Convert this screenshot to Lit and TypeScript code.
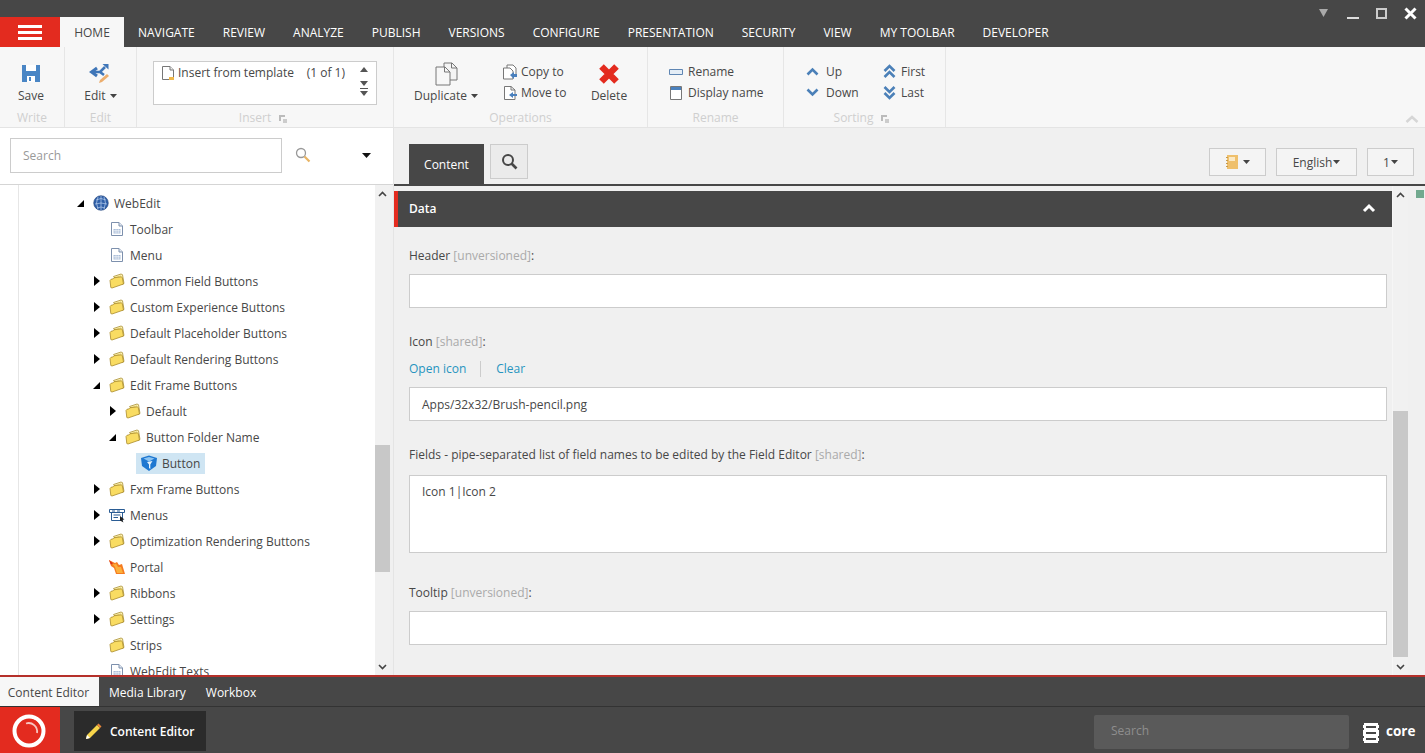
import { LitElement, html, svg, css } from "lit";
import { customElement } from "lit/decorators.js";

const folder = html`<svg width="16" height="16" viewBox="0 0 16 16"><path d="M4.500 3.500L12 1L13.500 1.700L15 10.500L13 11.500Z" fill="#fef4b8" stroke="#a98f34" stroke-width=".8"/><path d="M6 4.500L12 2.800" stroke="#e3c95c" stroke-width=".7"/><path d="M1 7.500L2 6.300L3.800 6L4.800 4.800L12.500 3.800L13.300 4.800L14.500 11L3 15L1.800 14.500Z" fill="#f9dc62" stroke="#a98a2b" stroke-width=".8" stroke-linejoin="round"/></svg>`;
const page = html`<svg width="16" height="16" viewBox="0 0 16 16"><path d="M2.500 1.500H10L13.500 5V14.500H2.500Z" fill="#fff" stroke="#7d90ad"/><path d="M10 1.500V5H13.500" fill="#e4eaf3" stroke="#7d90ad"/><path d="M4.500 8H11.500V12.500H4.500Z" fill="#a9bdd9"/><path d="M4.500 9.500H11.500M4.500 11H11.500M7 8V12.500M9.300 8V12.500" stroke="#fff" stroke-width=".5"/></svg>`;
const globe = html`<svg width="16" height="16" viewBox="0 0 16 16"><circle cx="8" cy="8" r="7.300" fill="#2f5fa8" stroke="#24457c" stroke-width=".6"/><path d="M3 5Q8 2 13 5M2 9Q8 7 14 9M4 13Q8 11 12 13M8 1V15M5 2Q2 8 5 14M11 2Q14 8 11 14" fill="none" stroke="#b9d0ee" stroke-width=".7"/></svg>`;
const btnIcon = html`<svg width="16" height="16" viewBox="0 0 16 16"><path d="M0 3L8 .5L16 3L15 11L8 16L1 11Z" fill="#1f78d1"/><path d="M2.500 3.500L8 2L13.500 3.500L8 6.500Z" fill="#8cc4f2"/><path d="M6 7L11.500 6L9.300 9.500V14L8 13V9.500Z" fill="#e8f3fc"/></svg>`;
const menusIcon = html`<svg width="16" height="16" viewBox="0 0 16 16"><path d="M.5 2.500H15.500V5.500H.5ZM2.500 5.500H13.500V13.500H2.500Z" fill="#fff" stroke="#2a5c94"/><path d="M4.500 8H11.500M4.500 10.500H9M3 4H6M8 4H11" stroke="#2a5c94"/><path d="M11 9L15.500 12.500L13.300 12.700L14.500 15.500L11 13.500Z" fill="#222"/></svg>`;
const portal = html`<svg width="16" height="16" viewBox="0 0 16 16"><path d="M0 1L6 4L8 3L10 6L13 5L16 15H7L5 9L2 7Z" fill="#f57b20"/><path d="M2 3L5 5.500L7 4.500L9 8L12 8L14 14H8L6 8Z" fill="#fbb03b"/><path d="M0 1L4 4.500L2 5.500Z" fill="#d92a1c"/></svg>`;
const chevUp = html`<svg width="9" height="6" viewBox="0 0 9 6"><path d="M1 5L4.500 1.500L8 5" fill="none" stroke="#444" stroke-width="1.600"/></svg>`;
const chevDown = html`<svg width="9" height="6" viewBox="0 0 9 6"><path d="M1 1L4.500 4.500L8 1" fill="none" stroke="#444" stroke-width="1.600"/></svg>`;
const launcher = html`<svg class="launch" width="8" height="8" viewBox="0 0 8 8"><path d="M0 0H6V2H2V6H0Z" fill="#bbb"/><path d="M4 4H8V8H4Z" fill="#ccc"/></svg>`;
const caret = html`<svg class="caret" width="7" height="4" viewBox="0 0 7 4"><path d="M0 0H7L3.500 4Z" fill="#444"/></svg>`;
const arrowBlueUp = html`<svg width="13" height="9" viewBox="0 0 13 9"><path d="M1.500 7.500L6.500 2.500L11.500 7.500" fill="none" stroke="#4b80b8" stroke-width="2.600"/></svg>`;
const arrowBlueDown = html`<svg width="13" height="9" viewBox="0 0 13 9"><path d="M1.500 1.500L6.500 6.500L11.500 1.500" fill="none" stroke="#4b80b8" stroke-width="2.600"/></svg>`;
const doubleUp = html`<svg width="13" height="15" viewBox="0 0 13 15"><path d="M1.500 7L6.500 2L11.500 7M1.500 13L6.500 8L11.500 13" fill="none" stroke="#4b80b8" stroke-width="2.600"/></svg>`;
const doubleDown = html`<svg width="13" height="15" viewBox="0 0 13 15"><path d="M1.500 2L6.500 7L11.500 2M1.500 8L6.500 13L11.500 8" fill="none" stroke="#4b80b8" stroke-width="2.600"/></svg>`;
const small = (inner: unknown) => html`<svg width="16" height="16" viewBox="0 0 16 16">${inner}</svg>`;

type Row = { l: number; a?: "open" | "closed"; i: unknown; t: string; sel?: boolean };
const rows: Row[] = [
  { l: 0, a: "open", i: globe, t: "WebEdit" },
  { l: 1, i: page, t: "Toolbar" },
  { l: 1, i: page, t: "Menu" },
  { l: 1, a: "closed", i: folder, t: "Common Field Buttons" },
  { l: 1, a: "closed", i: folder, t: "Custom Experience Buttons" },
  { l: 1, a: "closed", i: folder, t: "Default Placeholder Buttons" },
  { l: 1, a: "closed", i: folder, t: "Default Rendering Buttons" },
  { l: 1, a: "open", i: folder, t: "Edit Frame Buttons" },
  { l: 2, a: "closed", i: folder, t: "Default" },
  { l: 2, a: "open", i: folder, t: "Button Folder Name" },
  { l: 3, i: btnIcon, t: "Button", sel: true },
  { l: 1, a: "closed", i: folder, t: "Fxm Frame Buttons" },
  { l: 1, a: "closed", i: menusIcon, t: "Menus" },
  { l: 1, a: "closed", i: folder, t: "Optimization Rendering Buttons" },
  { l: 1, i: portal, t: "Portal" },
  { l: 1, a: "closed", i: folder, t: "Ribbons" },
  { l: 1, a: "closed", i: folder, t: "Settings" },
  { l: 1, i: folder, t: "Strips" },
  { l: 1, i: page, t: "WebEdit Texts" },
];
const tabs = ["NAVIGATE", "REVIEW", "ANALYZE", "PUBLISH", "VERSIONS", "CONFIGURE", "PRESENTATION", "SECURITY", "VIEW", "MY TOOLBAR", "DEVELOPER"];

@customElement("app-root")
export class AppRoot extends LitElement {
  static styles = css`
    :host { display: flex; flex-direction: column; width: 1425px; height: 753px; overflow: hidden; font-family: "Open Sans", sans-serif; font-size: 12px; color: #474747; background: #f0f0f0; }
    svg { display: block; flex: none; }
    .top { height: 47px; background: #474747; display: flex; flex: none; }
    .burger { width: 60px; height: 30px; background: #e32b1f; align-self: flex-end; display: flex; flex-direction: column; align-items: center; justify-content: center; gap: 3px; }
    .burger i { display: block; width: 24px; height: 3px; background: #fff; }
    .tabs { display: flex; align-self: flex-end; height: 30px; }
    .tab { padding: 2px 14px 0; height: 28px; line-height: 28px; color: #fff; white-space: nowrap; }
    .tab.active { background: #f7f7f7; color: #474747; width: 64px; box-sizing: content-box; text-align: center; padding: 2px 0 0; }
    .win { margin-left: auto; display: flex; align-items: flex-start; padding: 7px 0 0 0; }
    .win span { width: 29px; height: 12px; display: flex; justify-content: center; align-items: center; }
    .ribbon { height: 81px; box-sizing: border-box; flex: none; background: #f7f7f7; border-bottom: 1px solid #e4e4e4; display: flex; }
    .group { box-sizing: border-box; border-right: 1px solid #e6e6e6; display: flex; flex-direction: column; flex: none; }
    .gbody { height: 61px; flex: none; display: flex; }
    .glabel { height: 19px; line-height: 19px; text-align: center; color: #cfcfcf; display: flex; justify-content: center; align-items: center; gap: 8px; }
    .launch { margin-top: 2px; }
    .g-insert .glabel { padding-right: 4px; }
    .g-sort .glabel { padding-right: 6px; }
    .large { display: flex; flex-direction: column; align-items: center; padding-top: 12px; white-space: nowrap; }
    .licon { height: 29px; display: flex; align-items: center; justify-content: center; }
    .llabel { line-height: 16px; display: flex; align-items: center; gap: 4px; }
    .col { padding-top: 14px; }
    .srow { height: 21px; display: flex; align-items: center; white-space: nowrap; }
    .g-write { width: 65px; }
    .g-write .large { margin-left: -2px; }
    .g-edit { width: 72px; }
    .g-insert { width: 257px; }
    .g-ops { width: 254px; }
    .g-rename { width: 136px; }
    .g-sort { width: 162px; }
    .g-write .gbody, .g-edit .gbody { justify-content: center; }
    .insert { box-sizing: border-box; margin: 14px 0 0 16px; width: 224px; height: 44px; background: #fff; border: 1px solid #ccc; display: flex; }
    .insert .item { flex: 1; display: flex; align-items: flex-start; padding: 3px 0 0 6px; line-height: 16px; gap: 2px; }
    .insert .count { margin-left: auto; padding-right: 6px; }
    .insert .arrows { width: 25px; display: flex; flex-direction: column; align-items: center; padding-top: 5px; gap: 9px; }
    .tri { width: 0; height: 0; border-left: 4px solid transparent; border-right: 4px solid transparent; }
    .tri.u { border-bottom: 5px solid #555; }
    .tri.d { border-top: 5px solid #555; }
    .tri.bar { box-shadow: 0 -2px 0 -1px #555; margin-top: -1px; }
    .barline { width: 8px; height: 1px; background: #555; margin: -7px 0 -7px; }
    .collapse { margin: auto 6px 4px auto; }
    .dup { padding-left: 21px; width: 62px; }
    .copycol { margin-left: 25px; width: 89px; flex: none; }
    .copycol .srow svg { margin-right: 3px; }
    .del { width: 36px; }
    .rencol { padding-left: 21px; }
    .rencol svg { margin-right: 5px; }
    .sortcol { flex: none; }
    .sortcol.a { margin-left: 22px; width: 77px; }
    .sortcol.a .srow svg { margin-right: 7px; }
    .sortcol.b .srow svg { margin-right: 5px; }
    .main { flex: 1; display: flex; min-height: 0; }
    .left { width: 393px; flex: none; background: #fff; display: flex; flex-direction: column; }
    .search { height: 57px; box-sizing: border-box; flex: none; border-bottom: 1px solid #d5d5d5; display: flex; align-items: center; padding: 0 22px 2px 10px; background: #fff; }
    .sinput { box-sizing: border-box; width: 272px; height: 35px; border: 1px solid #ccc; line-height: 33px; padding-left: 12px; color: #999; }
    .mag { margin-left: 13px; }
    .dd { margin-left: auto; }
    .treewrap { flex: 1; display: flex; min-height: 0; }
    .tree { width: 357px; flex: none; box-sizing: border-box; border-left: 1px solid #e6e6e6; margin-left: 18px; padding-top: 5px; overflow: hidden; }
    .row { height: 26px; display: flex; align-items: center; }
    .exp { width: 16px; flex: none; display: flex; justify-content: center; }
    .closed { width: 0; height: 0; border-top: 5px solid transparent; border-bottom: 5px solid transparent; border-left: 6px solid #000; margin-left: 1px; }
    .open { width: 0; height: 0; border-bottom: 7px solid #000; border-left: 7px solid transparent; }
    .it { display: flex; align-items: center; height: 21px; padding: 0 5px; gap: 5px; white-space: nowrap; }
    .it.sel { background: #cfe5f3; }
    .sb { background: #f1f1f1; display: flex; flex-direction: column; align-items: center; flex: none; box-sizing: border-box; }
    .sb .up { height: 18px; display: flex; align-items: center; justify-content: center; flex: none; }
    .sb .track { flex: 1; width: 100%; }
    .sb .thumb { background: #c8c8c8; width: 100%; }
    .sb .down { height: 16px; display: flex; align-items: center; justify-content: center; flex: none; }
    .lsb { width: 15px; }
    .gutter { width: 3px; background: #f0f0f0; flex: none; }
    .right { flex: 1; min-width: 0; display: flex; flex-direction: column; border-left: 1px solid #e4e4e4; }
    .chead { height: 58px; flex: none; box-sizing: border-box; padding: 16px 11px 0 15px; border-bottom: 2px solid #474747; display: flex; align-items: flex-start; }
    .ctab { width: 75px; height: 40px; line-height: 42px; background: #474747; color: #fff; text-align: center; flex: none; }
    .sbtn { margin-left: 6px; box-sizing: border-box; width: 38px; height: 35px; border: 1px solid #ccc; background: #ebebeb; display: flex; align-items: center; justify-content: center; }
    .rbtns { margin-left: auto; display: flex; gap: 10px; padding-top: 4px; }
    .rbtn { box-sizing: border-box; height: 28px; border: 1px solid #ccc; background: #f4f4f4; display: flex; align-items: center; justify-content: center; gap: 1px; }
    .rb1 { width: 57px; gap: 4px; }
    .rb2 { width: 81px; }
    .rb3 { width: 47px; }
    .cbody { flex: 1; min-height: 0; display: flex; }
    .form { flex: 1; min-width: 0; padding: 5px 5px 0 0; }
    .data { height: 36px; box-sizing: border-box; background: #474747; border-left: 4px solid #e32b1f; display: flex; align-items: center; justify-content: space-between; color: #fff; font-weight: 600; padding: 0 16px 2px 11px; margin-right: -5px; }
    .fields { padding-left: 15px; }
    .lab { line-height: 18px; margin-top: 25px; }
    .lab.first { margin-top: 20px; }
    .lab.third { margin-top: 31px; }
    .lab em { font-style: normal; color: #aaa; }
    .inp { box-sizing: border-box; height: 34px; background: #fff; border: 1px solid #ccc; margin-top: 9px; padding: 1px 0 0 12px; line-height: 32px; }
    .ta { height: 78px; margin-top: 11px; padding-top: 6px; line-height: 20px; }
    .links { display: flex; align-items: center; margin-top: 9px; line-height: 18px; color: #2694bf; }
    .links b { font-weight: 400; }
    .links i { display: block; width: 1px; height: 16px; background: #ccc; margin: 0 15px 0 14px; }
    .rsb { width: 16px; border-left: 1px solid #f6f6f6; }
    .mark { width: 17px; flex: none; display: flex; justify-content: flex-start; align-items: flex-start; padding: 4px 0 0 8px; box-sizing: border-box; }
    .mark i { display: block; width: 8px; height: 8px; background: #72a98f; }
    .redline { height: 2px; flex: none; background: #b5302a; }
    .btabs { height: 30px; flex: none; box-sizing: border-box; background: #474747; display: flex; border-bottom: 1px solid #333; }
    .btab { padding: 0 10px; line-height: 31px; color: #fff; white-space: nowrap; }
    .btab.active { background: #f7f7f7; color: #474747; width: 99px; box-sizing: border-box; text-align: center; padding: 0 2px 0 0; }
    .dock { height: 46px; flex: none; background: #474747; display: flex; align-items: center; }
    .logo { width: 60px; height: 100%; background: #e32b1f; display: flex; align-items: center; justify-content: center; padding: 2px 3px 0 0; box-sizing: border-box; }
    .app { margin: 2px 0 0 14px; width: 132px; height: 40px; background: #2b2b2b; color: #fff; font-weight: 600; display: flex; align-items: center; gap: 8px; padding-left: 12px; box-sizing: border-box; }
    .dsearch { margin: 4px 0 0 auto; box-sizing: border-box; width: 255px; height: 34px; background: #5a5a5a; border-radius: 2px; padding-left: 17px; line-height: 32px; color: #8e8e8e; }
    .core { margin: 2px 0 0 14px; width: 62px; display: flex; align-items: center; gap: 7px; color: #fff; font-weight: 700; font-size: 13.5px; }
    .core svg { margin-top: 3px; }
  `;

  render() {
    return html`
      <div class="top">
        <div class="burger"><i></i><i></i><i></i></div>
        <div class="tabs">
          <div class="tab active">HOME</div>
          ${tabs.map((t) => html`<div class="tab">${t}</div>`)}
        </div>
        <div class="win">
          <span><svg width="11" height="8" viewBox="0 0 11 8"><path d="M1 0H10L5.500 8Z" fill="#aaa"/></svg></span>
          <span><svg width="12" height="12" viewBox="0 0 12 12"><path d="M0 10H12V12H0Z" fill="#ddd"/></svg></span>
          <span><svg width="11" height="11" viewBox="0 0 11 11"><path d="M1 1H10V10H1Z" fill="none" stroke="#ccc" stroke-width="2"/></svg></span>
          <span><svg width="13" height="13" viewBox="0 0 13 13"><path d="M1.500 1.500L11.500 11.500M11.500 1.500L1.500 11.500" stroke="#fff" stroke-width="3"/></svg></span>
        </div>
      </div>

      <div class="ribbon">
        <div class="group g-write">
          <div class="gbody"><div class="large">
            <div class="licon"><svg width="20" height="19" viewBox="0 0 20 19"><path d="M1 1H19V18H1Z" fill="#4a86c5"/><path d="M5 1H15V7H5Z" fill="#fff"/><path d="M6 12H14V18H6Z" fill="#fff"/><path d="M8 13H10V17H8Z" fill="#4a86c5"/></svg></div>
            <div class="llabel">Save</div>
          </div></div>
          <div class="glabel">Write</div>
        </div>
        <div class="group g-edit">
          <div class="gbody"><div class="large">
            <div class="licon"><svg width="22" height="21" viewBox="0 0 22 21"><path d="M8 5L2.500 9L8 13" fill="none" stroke="#3f76b8" stroke-width="3"/><path d="M3 9H11L16 4M11 9L15 12" fill="none" stroke="#3f76b8" stroke-width="2.600"/><path d="M13.500 1H19.500V6.500Z" fill="#3f76b8"/><path d="M11 17L18 11L20 13L13 19L10 20Z" fill="#ecae6e"/></svg></div>
            <div class="llabel">Edit${caret}</div>
          </div></div>
          <div class="glabel">Edit</div>
        </div>
        <div class="group g-insert">
          <div class="gbody"><div class="insert">
            <div class="item">
              ${small(svg`<path d="M2.500 1.500H10L13.500 5V14.500H2.500Z" fill="#fff" stroke="#777"/><path d="M10 1.500V5H13.500" fill="#eee" stroke="#777"/><path d="M9 12H14V15H9Z" fill="#f0b84b"/>`)}
              <span>Insert from template</span><span class="count">(1 of 1)</span>
            </div>
            <div class="arrows"><div class="tri u"></div><div class="tri d"></div><div class="barline"></div><div class="tri d"></div></div>
          </div></div>
          <div class="glabel">Insert ${launcher}</div>
        </div>
        <div class="group g-ops">
          <div class="gbody">
            <div class="large dup">
              <div class="licon"><svg width="23" height="24" viewBox="0 0 23 24"><path d="M9 1H17L22 6V18H9Z" fill="#f4f4f4" stroke="#777"/><path d="M16.500 1V6H22" fill="none" stroke="#777"/><path d="M1 5H10L15 10V23H1Z" fill="#f7f7f7" stroke="#777"/><path d="M9.500 5V10H15" fill="none" stroke="#777"/></svg></div>
              <div class="llabel">Duplicate${caret}</div>
            </div>
            <div class="col copycol">
              <div class="srow">${small(svg`<path d="M5 1H11L14 4V11H5Z" fill="#fff" stroke="#777"/><path d="M1.500 4H8L11 7V15H1.500Z" fill="#fff" stroke="#777"/><path d="M8 11L12 8V10H15V13H12V15Z" fill="#4a80bd"/>`)}Copy to</div>
              <div class="srow">${small(svg`<path d="M2.500 1.500H9L13 5V14.500H2.500Z" fill="#fff" stroke="#777"/><path d="M9 1.500V5H13" fill="none" stroke="#777"/><path d="M7 10L11 7V9H15V11H11V13Z" fill="#4a80bd"/>`)}Move to</div>
            </div>
            <div class="large del">
              <div class="licon"><svg width="22" height="22" viewBox="0 0 22 22"><path d="M3.500 3.500L18.500 18.500M18.500 3.500L3.500 18.500" stroke="#e32b1f" stroke-width="6.500"/></svg></div>
              <div class="llabel">Delete</div>
            </div>
          </div>
          <div class="glabel">Operations</div>
        </div>
        <div class="group g-rename">
          <div class="gbody"><div class="col rencol">
            <div class="srow"><svg width="14" height="8" viewBox="0 0 14 8"><path d="M.5 1.500H13.500V6.500H.5Z" fill="#e4edf6" stroke="#5f86b3"/></svg>Rename</div>
            <div class="srow"><svg width="14" height="14" viewBox="0 0 14 14"><path d="M1.500 .5H12.500V13.500H1.500Z" fill="#fff" stroke="#777"/><path d="M2 1H12V4H2Z" fill="#4a80bd"/></svg>Display name</div>
          </div></div>
          <div class="glabel">Rename</div>
        </div>
        <div class="group g-sort">
          <div class="gbody">
            <div class="col sortcol a">
              <div class="srow">${arrowBlueUp}Up</div>
              <div class="srow">${arrowBlueDown}Down</div>
            </div>
            <div class="col sortcol b">
              <div class="srow">${doubleUp}First</div>
              <div class="srow">${doubleDown}Last</div>
            </div>
          </div>
          <div class="glabel">Sorting ${launcher}</div>
        </div>
        <div class="collapse"><svg width="14" height="8" viewBox="0 0 14 8"><path d="M1.500 7L7 2L12.500 7" fill="none" stroke="#d6d6d6" stroke-width="2.500"/></svg></div>
      </div>

      <div class="main">
        <div class="left">
          <div class="search">
            <div class="sinput">Search</div>
            <svg class="mag" width="16" height="16" viewBox="0 0 16 16"><circle cx="6" cy="6" r="4.500" fill="none" stroke="#999" stroke-width="1.300"/><path d="M9.500 9.500L14.500 14.500" stroke="#e8b464" stroke-width="2.200"/></svg>
            <svg class="dd" width="9" height="5" viewBox="0 0 9 5"><path d="M0 0H9L4.500 5Z" fill="#111"/></svg>
          </div>
          <div class="treewrap">
            <div class="tree">
              ${rows.map((r) => html`
                <div class="row" style="padding-left:${53 + r.l * 16}px">
                  <div class="exp">${r.a === "open" ? html`<div class="open"></div>` : r.a === "closed" ? html`<div class="closed"></div>` : ""}</div>
                  <div class="it ${r.sel ? "sel" : ""}">${r.i}<span>${r.t}</span></div>
                </div>`)}
            </div>
            <div class="sb lsb">
              <div class="up">${chevUp}</div>
              <div class="track" style="flex:0 0 242px"></div>
              <div class="thumb" style="height:127px;flex:none"></div>
              <div class="track"></div>
              <div class="down">${chevDown}</div>
            </div>
            <div class="gutter"></div>
          </div>
        </div>
        <div class="right">
          <div class="chead">
            <div class="ctab">Content</div>
            <div class="sbtn"><svg width="17" height="17" viewBox="0 0 17 17"><circle cx="7" cy="7" r="5" fill="none" stroke="#474747" stroke-width="2"/><path d="M10.500 10.500L15.500 15.500" stroke="#474747" stroke-width="2.600"/></svg></div>
            <div class="rbtns">
              <div class="rbtn rb1"><svg width="13" height="14" viewBox="0 0 13 14"><path d="M1 0H12V14H1Z" fill="#efc06c"/><path d="M3 2H9V6H3Z" fill="#fbe9c4"/><path d="M0 2H2V3H0ZM0 5H2V6H0ZM0 8H2V9H0ZM0 11H2V12H0Z" fill="#c79b4a"/></svg>${caret}</div>
              <div class="rbtn rb2">English${caret}</div>
              <div class="rbtn rb3">1${caret}</div>
            </div>
          </div>
          <div class="cbody">
            <div class="form">
              <div class="data"><span>Data</span><svg width="14" height="10" viewBox="0 0 14 10"><path d="M2 8L7 3L12 8" fill="none" stroke="#fff" stroke-width="3"/></svg></div>
              <div class="fields">
                <div class="lab first">Header <em>[unversioned]</em>:</div>
                <div class="inp"></div>
                <div class="lab">Icon <em>[shared]</em>:</div>
                <div class="links"><b>Open icon</b><i></i><b>Clear</b></div>
                <div class="inp">Apps/32x32/Brush-pencil.png</div>
                <div class="lab">Fields - pipe-separated list of field names to be edited by the Field Editor <em>[shared]</em>:</div>
                <div class="inp ta">Icon 1|Icon 2</div>
                <div class="lab third">Tooltip <em>[unversioned]</em>:</div>
                <div class="inp"></div>
              </div>
            </div>
            <div class="sb rsb">
              <div class="up">${chevUp}</div>
              <div class="track" style="flex:0 0 207px"></div>
              <div class="thumb" style="height:246px;flex:none"></div>
              <div class="track"></div>
              <div class="down">${chevDown}</div>
            </div>
            <div class="mark"><i></i></div>
          </div>
        </div>
      </div>

      <div class="redline"></div>
      <div class="btabs">
        <div class="btab active">Content Editor</div>
        <div class="btab">Media Library</div>
        <div class="btab">Workbox</div>
      </div>
      <div class="dock">
        <div class="logo"><svg width="34" height="34" viewBox="0 0 34 34"><circle cx="17" cy="17" r="14.500" fill="none" stroke="#fff" stroke-width="4"/><path d="M14 9.500A8.500 8.500 0 0 1 25 19" fill="none" stroke="#f7c5c0" stroke-width="1.800"/><path d="M20 5.500A12 12 0 0 1 28.500 17" fill="none" stroke="#e32b1f" stroke-width="1"/></svg></div>
        <div class="app"><svg width="16" height="16" viewBox="0 0 16 16"><path d="M1 12L11 2L14 5L4 15L0 16Z" fill="#f7d54a"/><path d="M11 2L12.500 .5L15.500 3.500L14 5Z" fill="#e8863a"/><path d="M1 12L4 15L0 16Z" fill="#fff"/></svg>Content Editor</div>
        <div class="dsearch">Search</div>
        <div class="core"><svg width="16" height="20" viewBox="0 0 16 20"><path d="M1 0H15V2H16V5H15V7H16V13H15V15H16V18H15V20H1V18H0V15H1V13H0V7H1V5H0V2H1Z" fill="#fff"/><path d="M3 3H13V5H3ZM3 9H13V11H3ZM3 15H13V17H3Z" fill="#474747"/></svg>core</div>
      </div>
    `;
  }
}
